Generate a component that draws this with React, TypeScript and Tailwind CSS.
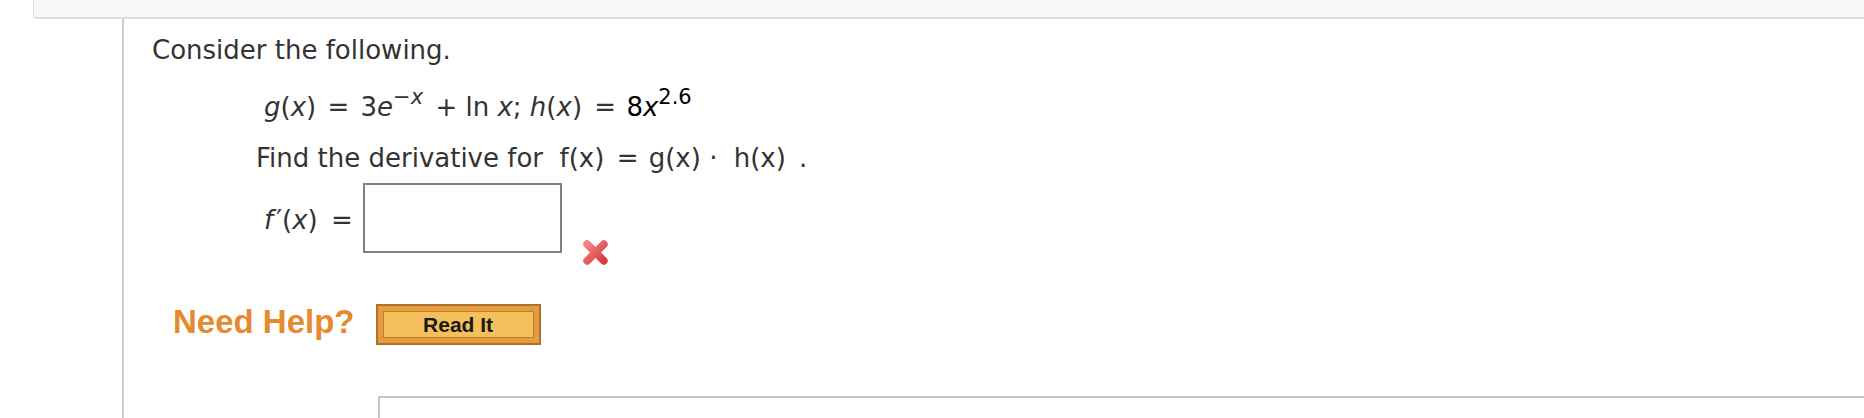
import React from "react";

function WrongMark() {
  return (
    <svg width="27" height="27" viewBox="0 0 26 26" className="mt-[56px] ml-[20px] shrink-0">
      <defs>
        <linearGradient id="xg" x1="0" y1="0" x2="1" y2="1">
          <stop offset="0" stopColor="#f08282" />
          <stop offset="1" stopColor="#d83c3c" />
        </linearGradient>
      </defs>
      <g stroke="url(#xg)" strokeWidth="7.5" strokeLinecap="round">
        <line x1="5" y1="5" x2="21" y2="21" />
        <line x1="21" y1="5" x2="5" y2="21" />
      </g>
    </svg>
  );
}

function ReadItButton() {
  return (
    <div className="ml-[21px] h-[41px] w-[165px] shrink-0 border-2 border-[#a9732f] bg-[#e89b3e] p-[5px]">
      <div className="flex h-full w-full items-center justify-center border border-[#b98231] bg-[#f3c05c] font-['Liberation_Sans',Arial,sans-serif] text-[21px] font-bold text-[#1a1a1a]">
        Read It
      </div>
    </div>
  );
}

const sup = "relative -top-[12px] text-[21px] leading-none";

export default function App() {
  return (
    <div className="h-[418px] w-[1864px] overflow-hidden bg-white font-['DejaVu_Sans',Verdana,sans-serif] text-[#333]">
      <div className="ml-[33px] h-[19px] rounded-bl-[4px] border-b-2 border-l border-[#dddddd] bg-[#f7f7f7]" />
      <div className="ml-[122px] h-[399px] border-l-2 border-[#cccccc] pl-[28px] pt-[16px]">
        <p className="text-[26px] leading-[30px]">Consider the following.</p>

        <div className="ml-[112px] mt-[27px] whitespace-pre text-[26px] leading-[30px]">
          <i>g</i>(<i>x</i>) <span className="ml-[3px] mr-[3px]">=</span> 3<i>e</i><span className={sup}>−<i>x</i></span> <span className="ml-[4px]">+</span> ln <i>x</i>; <i>h</i>(<i>x</i>) <span className="ml-[4px] mr-[2px]">=</span> <span className="text-black">8<i>x</i><span className={sup}>2.6</span></span>
        </div>

        <p className="ml-[104px] mt-[21px] whitespace-pre text-[26px] leading-[30px]">
          Find the derivative for  f(x) <span className="ml-[4px] mr-[2px]">=</span> g(x) <span className="mr-[8px]">·</span> h(x) <span className="ml-[5px]">.</span>
        </p>

        <div className="ml-[110px] mt-[10px] flex items-start">
          <div className="mt-[22px] w-[101px] pl-[2px] whitespace-pre text-[26px] leading-[30px]">
            <i>f</i><span className="ml-[3px]">′</span>(<i>x</i>) <span className="ml-[5px]">=</span>
          </div>
          <div className="h-[70px] w-[199px] shrink-0 border-2 border-[#808080] bg-white" />
          <WrongMark />
        </div>

        <div className="ml-[21px] mt-[38px] flex items-start">
          <span className="whitespace-nowrap font-['Liberation_Sans',Arial,sans-serif] text-[33px] font-bold leading-[36px] text-[#e68a2e]">
            Need Help?
          </span>
          <ReadItButton />
        </div>

        <div className="ml-[226px] mt-[51px] h-[40px] border-l-2 border-t-2 border-[#c8c8c8]" />
      </div>
    </div>
  );
}
